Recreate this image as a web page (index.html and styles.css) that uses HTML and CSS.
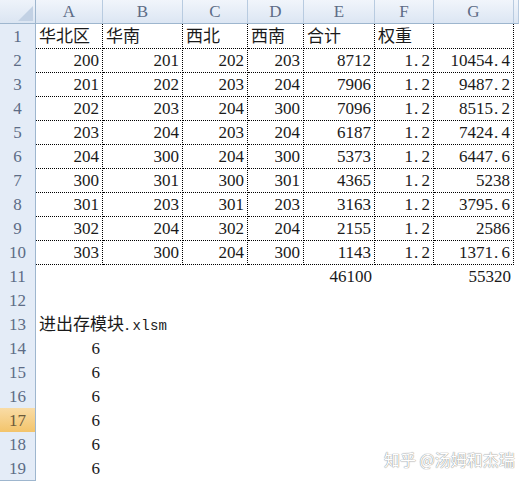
FILE: index.html
```html
<!DOCTYPE html>
<html lang="zh-CN">
<head>
<meta charset="utf-8">
<title>进出存模块.xlsm</title>
<link rel="stylesheet" href="styles.css">
</head>
<body>
<div class="sheet">
  <div class="row head">
    <div class="corner"><span class="tri"></span></div>
    <div class="ch">A</div><div class="ch">B</div><div class="ch">C</div><div class="ch">D</div>
    <div class="ch">E</div><div class="ch">F</div><div class="ch">G</div><div class="ch">&nbsp;</div>
  </div>

  <div class="row">
    <div class="rh">1</div>
    <div class="c t b">华北区</div><div class="c t b">华南</div><div class="c t b">西北</div><div class="c t b">西南</div>
    <div class="c t b">合计</div><div class="c t b">权重</div><div class="c t b"></div>
  </div>
  <div class="row">
    <div class="rh">2</div>
    <div class="c b">200</div><div class="c b">201</div><div class="c b">202</div><div class="c b">203</div>
    <div class="c b">8712</div><div class="c b">1<span class="dot">.</span>2</div><div class="c b">10454<span class="dot">.</span>4</div>
  </div>
  <div class="row">
    <div class="rh">3</div>
    <div class="c b">201</div><div class="c b">202</div><div class="c b">203</div><div class="c b">204</div>
    <div class="c b">7906</div><div class="c b">1<span class="dot">.</span>2</div><div class="c b">9487<span class="dot">.</span>2</div>
  </div>
  <div class="row">
    <div class="rh">4</div>
    <div class="c b">202</div><div class="c b">203</div><div class="c b">204</div><div class="c b">300</div>
    <div class="c b">7096</div><div class="c b">1<span class="dot">.</span>2</div><div class="c b">8515<span class="dot">.</span>2</div>
  </div>
  <div class="row">
    <div class="rh">5</div>
    <div class="c b">203</div><div class="c b">204</div><div class="c b">203</div><div class="c b">204</div>
    <div class="c b">6187</div><div class="c b">1<span class="dot">.</span>2</div><div class="c b">7424<span class="dot">.</span>4</div>
  </div>
  <div class="row">
    <div class="rh">6</div>
    <div class="c b">204</div><div class="c b">300</div><div class="c b">204</div><div class="c b">300</div>
    <div class="c b">5373</div><div class="c b">1<span class="dot">.</span>2</div><div class="c b">6447<span class="dot">.</span>6</div>
  </div>
  <div class="row">
    <div class="rh">7</div>
    <div class="c b">300</div><div class="c b">301</div><div class="c b">300</div><div class="c b">301</div>
    <div class="c b">4365</div><div class="c b">1<span class="dot">.</span>2</div><div class="c b">5238</div>
  </div>
  <div class="row">
    <div class="rh">8</div>
    <div class="c b">301</div><div class="c b">203</div><div class="c b">301</div><div class="c b">203</div>
    <div class="c b">3163</div><div class="c b">1<span class="dot">.</span>2</div><div class="c b">3795<span class="dot">.</span>6</div>
  </div>
  <div class="row">
    <div class="rh">9</div>
    <div class="c b">302</div><div class="c b">204</div><div class="c b">302</div><div class="c b">204</div>
    <div class="c b">2155</div><div class="c b">1<span class="dot">.</span>2</div><div class="c b">2586</div>
  </div>
  <div class="row">
    <div class="rh">10</div>
    <div class="c b">303</div><div class="c b">300</div><div class="c b">204</div><div class="c b">300</div>
    <div class="c b">1143</div><div class="c b">1<span class="dot">.</span>2</div><div class="c b">1371<span class="dot">.</span>6</div>
  </div>
  <div class="row">
    <div class="rh">11</div>
    <div class="c"></div><div class="c"></div><div class="c"></div><div class="c"></div>
    <div class="c">46100</div><div class="c"></div><div class="c">55320</div>
  </div>
  <div class="row">
    <div class="rh">12</div>
    <div class="c"></div>
  </div>
  <div class="row">
    <div class="rh">13</div>
    <div class="c t over">进出存模块<span class="dot">.</span><span class="mono">xlsm</span></div>
  </div>
  <div class="row"><div class="rh">14</div><div class="c">6</div></div>
  <div class="row"><div class="rh">15</div><div class="c">6</div></div>
  <div class="row"><div class="rh">16</div><div class="c">6</div></div>
  <div class="row"><div class="rh sel">17</div><div class="c">6</div></div>
  <div class="row"><div class="rh">18</div><div class="c">6</div></div>
  <div class="row"><div class="rh">19</div><div class="c">6</div></div>

  <div class="mark">知乎 @汤姆和杰瑞</div>
</div>
</body>
</html>
```

FILE: styles.css
```css
* { box-sizing: border-box; }
html, body { margin: 0; padding: 0; background: #fff; }
body { width: 519px; height: 481px; overflow: hidden; }

.sheet {
  position: relative;
  font-family: "Liberation Serif", "Noto Sans CJK SC", serif;
  font-size: 17px;
  color: #1a1a1a;
}

.row {
  display: grid;
  grid-template-columns: 36px 67px 80px 65px 56px 71px 59px 80px 1fr;
  height: 24px;
}

.head .corner {
  position: relative;
  background: linear-gradient(#eef3fa, #dbe5f2);
  border-right: 1px solid #9eb6ce;
  border-bottom: 1px solid #9eb6ce;
}
.tri {
  position: absolute;
  right: 2px;
  bottom: 2px;
  width: 0; height: 0;
  border-left: 15px solid transparent;
  border-bottom: 15px solid #c2d1e4;
}

.ch {
  background: linear-gradient(#f1f5fb, #dce6f3);
  border-right: 1px solid #b8cbe0;
  border-bottom: 1px solid #9eb6ce;
  text-align: center;
  color: #5d6c86;
  line-height: 23px;
}

.rh {
  background: #e4ecf7;
  border-right: 1px solid #9eb6ce;
  border-bottom: 1px solid #9eb6ce;
  text-align: center;
  color: #5d6c86;
  line-height: 23px;
  padding-top: 1px;
}
.rh.sel {
  background: linear-gradient(#f9dca6, #f3c46b);
  border-bottom-color: #e2b35a;
  color: #6b5a3c;
}

.c {
  text-align: right;
  padding: 2px 3px 0 3px;
  line-height: 22px;
  white-space: nowrap;
}
.c.t { text-align: left; }
.c.over { overflow: visible; position: relative; z-index: 1; }
.c.b {
  border-right: 1px dotted #000;
  border-bottom: 1px dotted #000;
}

.dot {
  display: inline-block;
  width: 8.5px;
  text-align: left;
  padding-left: 1px;
}
.mono {
  font-family: "Liberation Mono", monospace;
  font-size: 14px;
  letter-spacing: 0.3px;
}

.mark {
  position: absolute;
  left: 384px;
  top: 447px;
  white-space: nowrap;
  font-family: "Noto Sans CJK SC", sans-serif;
  font-size: 16px;
  color: #fff;
  text-shadow: 0 0 1px #8a8a8a, 0 0 1px #8a8a8a;
}
```
